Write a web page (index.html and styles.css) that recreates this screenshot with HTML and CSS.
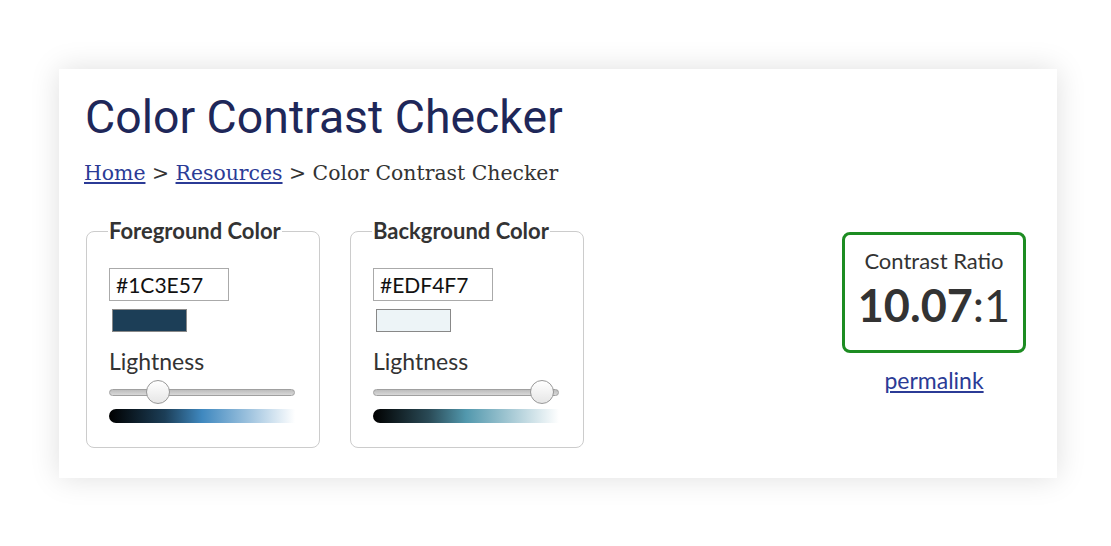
FILE: index.html
```html
<!DOCTYPE html>
<html lang="en">
<head>
<meta charset="utf-8">
<title>Color Contrast Checker</title>
<link rel="stylesheet" href="styles.css">
</head>
<body>
<div class="page">
  <main class="card">
    <h1 class="title">Color Contrast Checker</h1>
    <p class="breadcrumb"><a href="#">Home</a> &gt; <a href="#">Resources</a> &gt; Color Contrast Checker</p>
    <div class="row">
      <fieldset class="picker">
        <legend>Foreground Color</legend>
        <input class="hex" type="text" value="#1C3E57">
        <div class="swatch swatch-fg"></div>
        <div class="label">Lightness</div>
        <div class="track"><span class="thumb" style="left: 48px"></span></div>
        <div class="gradient gradient-fg"></div>
      </fieldset>
      <fieldset class="picker">
        <legend>Background Color</legend>
        <input class="hex" type="text" value="#EDF4F7">
        <div class="swatch swatch-bg"></div>
        <div class="label">Lightness</div>
        <div class="track"><span class="thumb" style="left: 168px"></span></div>
        <div class="gradient gradient-bg"></div>
      </fieldset>
      <div class="result">
        <div class="ratio-box">
          <div class="ratio-label">Contrast Ratio</div>
          <div class="ratio-value"><b>10.07</b>:1</div>
        </div>
        <a class="permalink" href="#">permalink</a>
      </div>
    </div>
  </main>
</div>
</body>
</html>
```

FILE: styles.css
```css
* { box-sizing: border-box; }
html, body { margin: 0; background: #fff; }
body { font-family: Lato, "Open Sans", sans-serif; color: #333; }
.page { padding: 69px 54px 68px 59px; }
.card {
  width: 998px;
  height: 409px;
  background: #fff;
  box-shadow: 0 0 28px rgba(0,0,0,0.13);
  padding: 21px 31px 0 26px;
}
.title {
  margin: 0;
  font-family: Roboto, sans-serif;
  font-weight: 400;
  font-size: 46.4px;
  line-height: 54px;
  color: #1e2759;
}
.breadcrumb {
  margin: 15px 0 0 -1px;
  font-family: "DejaVu Serif", serif;
  font-size: 20.4px;
  line-height: 28px;
  color: #333;
}
.breadcrumb a { color: #2b3b96; }
.row { display: flex; align-items: flex-start; margin-top: 31px; }
.picker {
  width: 234px;
  margin: 0 30px 0 0;
  padding: 24px 22px 24px 22px;
  border: 1px solid #ccc;
  border-radius: 8px;
}
.picker:first-child { margin-left: 1px; }
.picker legend {
  padding: 0 1px;
  margin-left: -1px;
  font-weight: 700;
  font-size: 22px;
  line-height: 26px;
  color: #333;
}
.hex {
  display: block;
  width: 120px;
  height: 33px;
  margin: 0;
  padding: 0 6px;
  border: 1px solid #aaa;
  font-family: Lato, sans-serif;
  font-size: 21px;
  color: #111;
}
.swatch {
  width: 75px;
  height: 23px;
  margin: 8px 0 0 3px;
  border: 1px solid #888;
}
.swatch-fg { background: #1c3e57; }
.swatch-bg { background: #edf4f7; }
.label {
  margin-top: 16px;
  font-size: 23px;
  line-height: 26px;
  color: #333;
}
.track {
  position: relative;
  width: 186px;
  height: 7px;
  margin-top: 15px;
  border: 1px solid #a0a0a0;
  border-radius: 4px;
  background: linear-gradient(#bdbdbd, #d8d8d8);
}
.thumb {
  position: absolute;
  top: -10px;
  width: 24px;
  height: 24px;
  margin-left: -12px;
  border: 1px solid #999;
  border-radius: 50%;
  background: linear-gradient(#fff, #e6e6e6);
}
.gradient {
  width: 186px;
  height: 14px;
  margin-top: 13px;
  border-radius: 7px 0 0 7px;
}
.gradient-fg { background: linear-gradient(to right, #000, #1c3e57 30%, #3f88bf 50%, #9dc2de 75%, #fff); }
.gradient-bg { background: linear-gradient(to right, #000, #2a4a56 30%, #5298ad 50%, #a9cbd6 75%, #fff); }
.result {
  margin-left: auto;
  display: flex;
  flex-direction: column;
  align-items: center;
  padding-top: 14px;
}
.ratio-box {
  width: 184px;
  height: 121px;
  border: 3px solid #1d8c22;
  border-radius: 8px;
  text-align: center;
  padding-top: 12px;
}
.ratio-label { font-size: 22px; line-height: 28px; color: #333; }
.ratio-value { margin-top: 3px; font-size: 45px; line-height: 54px; color: #333; }
.ratio-value b { font-weight: 700; }
.permalink {
  margin-top: 13px;
  font-size: 23px;
  color: #2b3b96;
}
```
